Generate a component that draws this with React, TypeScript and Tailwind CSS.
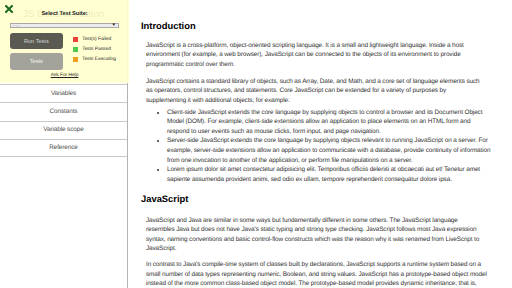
const navItems = ["Variables", "Constants", "Variable scope", "Reference"];

const legend = [
	{ label: "Test(s) Failed", color: "bg-[#e8403a]" },
	{ label: "Tests Passed", color: "bg-[#4fc94f]" },
	{ label: "Tests Executing", color: "bg-[#f0a020]" },
];

function TestSuite() {
	return (
		<div className="absolute left-0 top-0 z-10 h-[83px] w-[129px] bg-[rgba(255,255,204,0.9)] text-[#222]">
			{/* close button */}
			<svg className="absolute left-[5px] top-[5px]" width="8" height="8" viewBox="0 0 8 8">
				<path d="M1 1 L7 7 M7 1 L1 7" stroke="#1a6b1a" strokeWidth="2" strokeLinecap="square" />
			</svg>
			<div className="pt-[11px] text-center text-[5.6px] font-bold leading-[7px]">Select Test Suite:</div>
			<div className="mx-[10px] mt-[4.7px] flex h-[5.7px] items-center justify-between border border-[#a8a8a8] bg-[#ececec] px-[2px]">
				<span className="text-[4px] leading-none">- - -</span>
				<span className="text-[4.5px] leading-none">▼</span>
			</div>
			<div className="mt-[4.3px] flex gap-[10.3px] pl-[10px]">
				<div className="flex w-[52.7px] flex-col gap-[4px]">
					<button className="h-[16.5px] rounded-[3px] bg-[#5a5a52] text-[5.6px] text-[#d4d4d4]">Run Tests</button>
					<button className="h-[16.5px] rounded-[3px] bg-[#a3a39b] text-[5.6px] text-[#f4f4f4]">Tests</button>
				</div>
				<div className="flex flex-col gap-[4.7px] pt-[4.3px]">
					{legend.map((l) => (
						<div key={l.label} className="flex items-center gap-[4px]">
							<span className={`h-[5.3px] w-[5.3px] ${l.color}`} />
							<span className="text-[4.8px] leading-[5.3px]">{l.label}</span>
						</div>
					))}
				</div>
			</div>
			<div className="mt-[3px] text-center text-[4.8px] leading-[6px] underline">Ask For Help</div>
		</div>
	);
}

export default function App() {
	return (
		<div className="relative flex h-[288px] w-[512px] overflow-hidden bg-white font-['Liberation_Sans',Arial,sans-serif] text-[#333] [text-rendering:geometricPrecision]">
			<nav className="w-[128px] shrink-0 border-r border-[#b4b4b4]">
				<header className="h-[84px] pt-[9px] text-center text-[10px] leading-[12px] text-[#222]">JS Documentation</header>
				<ul>
					{navItems.map((item, i) => (
						<li
							key={item}
							className={`flex h-[18.3px] items-center justify-center border-t border-[#c8c8c8] text-[6.4px] tracking-[-0.11px] text-[#4d4d4d] ${i === navItems.length - 1 ? "border-b" : ""}`}
						>
							{item}
						</li>
					))}
				</ul>
			</nav>

			<main className="flex-1 pl-[13px] pr-[20px] pt-[19.5px] text-[6.4px] leading-[9.6px] tracking-[-0.11px]">
				<section>
					<h2 className="text-[9.4px] font-bold leading-[11px] tracking-normal text-black">Introduction</h2>
					<p className="mt-[10.2px] px-[5px]">
						JavaScript is a cross-platform, object-oriented scripting language. It is a small and lightweight language. Inside a host environment (for example, a web browser), JavaScript can be connected to the objects of its environment to provide programmatic control over them.
					</p>
					<p className="mt-[7.2px] px-[5px]">
						JavaScript contains a standard library of objects, such as Array, Date, and Math, and a core set of language elements such as operators, control structures, and statements. Core JavaScript can be extended for a variety of purposes by supplementing it with additional objects; for example:
					</p>
					<ul className="mt-[2.2px] list-disc pl-[26px]">
						<li>
							Client-side JavaScript extends the core language by supplying objects to control a browser and its Document Object Model (DOM). For example, client-side extensions allow an application to place elements on an HTML form and respond to user events such as mouse clicks, form input, and page navigation.
						</li>
						<li>
							Server-side JavaScript extends the core language by supplying objects relevant to running JavaScript on a server. For example, server-side extensions allow an application to communicate with a database, provide continuity of information from one invocation to another of the application, or perform file manipulations on a server.
						</li>
						<li>
							Lorem ipsum dolor sit amet consectetur adipisicing elit. Temporibus officiis deleniti at obcaecati aut et! Tenetur amet sapiente assumenda provident animi, sed odio ex ullam, tempore reprehenderit consequatur dolore ipsa.
						</li>
					</ul>
				</section>
				<section>
					<h2 className="mt-[8.5px] text-[9.4px] font-bold leading-[11px] tracking-normal text-black">JavaScript</h2>
					<p className="mt-[11.7px] px-[5px]">
						JavaScript and Java are similar in some ways but fundamentally different in some others. The JavaScript language resembles Java but does not have Java's static typing and strong type checking. JavaScript follows most Java expression syntax, naming conventions and basic control-flow constructs which was the reason why it was renamed from LiveScript to JavaScript.
					</p>
					<p className="mt-[6px] px-[5px]">
						In contrast to Java's compile-time system of classes built by declarations, JavaScript supports a runtime system based on a small number of data types representing numeric, Boolean, and string values. JavaScript has a prototype-based object model instead of the more common class-based object model. The prototype-based model provides dynamic inheritance; that is, what is inherited can vary for individual objects. JavaScript also supports functions without any special declarative requirements.
					</p>
				</section>
			</main>

			<TestSuite />
		</div>
	);
}
